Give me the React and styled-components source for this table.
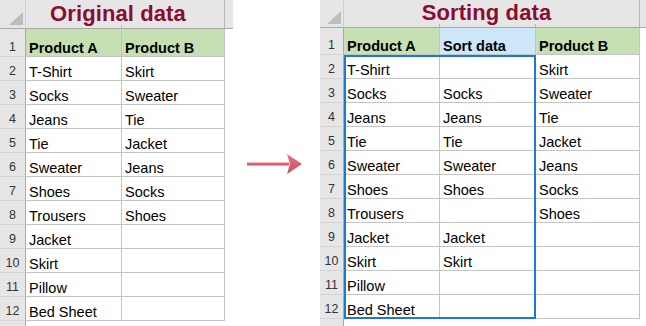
import React from 'react';
import styled, { createGlobalStyle } from 'styled-components';

const GlobalStyle = createGlobalStyle`
  html, body { margin: 0; padding: 0; background: #ffffff; }
  #root { width: 646px; height: 326px; overflow: hidden; }
`;

const GRID = '#c4c4c4';
const HEAD_BG = '#e6e6e6';
const HEAD_EDGE = '#a9a9a9';
const FONT = '"Liberation Sans", Arial, sans-serif';

const Page = styled.div`
  display: flex;
  align-items: flex-start;
  width: 646px;
  height: 326px;
  font-family: ${FONT};
`;

const Sheet = styled.div`
  position: relative;
  display: grid;
  grid-template-columns: ${(p) => p.$cols};
  grid-template-rows: ${(p) => p.$rows};
  flex: none;
`;

const Corner = styled.div`
  position: relative;
  background: ${HEAD_BG};
  border-right: 1px solid #cfcfcf;
  border-bottom: 1px solid ${HEAD_EDGE};
  &::after {
    content: '';
    position: absolute;
    right: 2px;
    bottom: 3px;
    width: 14px;
    height: 13px;
    background: #bdbdbd;
    clip-path: polygon(100% 0, 100% 100%, 0 100%);
  }
`;

const ColHead = styled.div`
  background: ${HEAD_BG};
  border-bottom: 1px solid ${HEAD_EDGE};
  border-right: ${(p) => (p.$sep ? `1px solid ${p.$sep}` : 'none')};
`;

const Title = styled.div`
  position: absolute;
  grid-row: 1;
  grid-column: ${(p) => p.$span};
  top: 0;
  left: 0;
  right: 1px;
  z-index: 1;
  height: ${(p) => p.$h}px;
  padding-top: ${(p) => p.$pt}px;
  padding-right: ${(p) => p.$shift}px;
  box-sizing: border-box;
  background: ${HEAD_BG};
  display: flex;
  justify-content: center;
  font-size: 22px;
  line-height: 24px;
  font-weight: bold;
  letter-spacing: 0.1px;
  color: #8c0c2f;
  white-space: nowrap;
`;

const RowNum = styled.div`
  background: ${HEAD_BG};
  border-right: 1px solid ${HEAD_EDGE};
  border-bottom: ${(p) => (p.$last ? 'none' : '1px solid #d3d3d3')};
  display: flex;
  align-items: flex-end;
  justify-content: center;
  padding-bottom: 2px;
  box-sizing: border-box;
  font-size: 12.5px;
  line-height: 14px;
  color: #333333;
`;

const Cell = styled.div`
  background: ${(p) => p.$bg || '#ffffff'};
  border-right: 1px solid ${GRID};
  border-bottom: 1px solid ${GRID};
  display: flex;
  align-items: flex-end;
  padding-left: 3px;
  box-sizing: border-box;
  overflow: hidden;
  white-space: nowrap;
  font-size: 14.5px;
  line-height: 16px;
  font-weight: ${(p) => (p.$bold ? 'bold' : 'normal')};
  color: #000000;
`;

const Blank = styled.div`
  background: #ffffff;
`;

const Selection = styled.div`
  position: absolute;
  inset: 0;
  grid-column: ${(p) => p.$cols};
  grid-row: ${(p) => p.$rows};
  border: 2px solid #1c7ad0;
  pointer-events: none;
  z-index: 2;
`;

const ArrowArea = styled.div`
  width: 87px;
  height: 326px;
  flex: none;
  display: flex;
  align-items: center;
  padding-left: 14px;
  padding-top: 1px;
  box-sizing: border-box;
`;

const left = {
  header: ['Product A', 'Product B'],
  rows: [
    ['T-Shirt', 'Skirt'],
    ['Socks', 'Sweater'],
    ['Jeans', 'Tie'],
    ['Tie', 'Jacket'],
    ['Sweater', 'Jeans'],
    ['Shoes', 'Socks'],
    ['Trousers', 'Shoes'],
    ['Jacket', ''],
    ['Skirt', ''],
    ['Pillow', ''],
    ['Bed Sheet', ''],
  ],
};

const right = {
  header: ['Product A', 'Sort data', 'Product B'],
  rows: [
    ['T-Shirt', '', 'Skirt'],
    ['Socks', 'Socks', 'Sweater'],
    ['Jeans', 'Jeans', 'Tie'],
    ['Tie', 'Tie', 'Jacket'],
    ['Sweater', 'Sweater', 'Jeans'],
    ['Shoes', 'Shoes', 'Socks'],
    ['Trousers', '', 'Shoes'],
    ['Jacket', 'Jacket', ''],
    ['Skirt', 'Skirt', ''],
    ['Pillow', '', ''],
    ['Bed Sheet', '', ''],
  ],
};

const GREEN = '#c6e0b4';
const BLUE = '#cde7f8';

function Spreadsheet({ cols, rows, data, title, titleH, titlePt, titleShift, headerBgs, selection }) {
  const n = data.header.length;
  return (
    <Sheet $cols={cols} $rows={rows}>
      <Corner />
      {data.header.map((_, i) => (
        <ColHead key={`h${i}`} $sep="#b5b5b5" />
      ))}
      <ColHead />
      <Title $span={`2 / ${n + 2}`} $h={titleH} $pt={titlePt} $shift={titleShift}>
        {title}
      </Title>

      <RowNum>1</RowNum>
      {data.header.map((h, i) => (
        <Cell key={`c1-${i}`} $bold $bg={headerBgs[i]}>
          {h}
        </Cell>
      ))}
      <Blank />

      {data.rows.map((r, ri) => (
        <React.Fragment key={`r${ri}`}>
          <RowNum>{ri + 2}</RowNum>
          {r.map((v, ci) => (
            <Cell key={`c${ri}-${ci}`}>{v}</Cell>
          ))}
          <Blank />
        </React.Fragment>
      ))}

      <RowNum $last />
      {data.header.map((_, i) => (
        <Blank key={`b${i}`} />
      ))}
      <Blank />

      {selection && <Selection $cols={selection.cols} $rows={selection.rows} />}
    </Sheet>
  );
}

function Arrow() {
  return (
    <svg width="56" height="22" viewBox="0 0 56 22">
      <defs>
        <linearGradient id="arrowGrad" x1="0" y1="0" x2="0" y2="1">
          <stop offset="0" stopColor="#e57383" />
          <stop offset="1" stopColor="#cf4a5e" />
        </linearGradient>
      </defs>
      <rect x="0" y="9.5" width="42" height="3" fill="url(#arrowGrad)" />
      <path d="M40 1 L55 11 L40 21 L43 11 Z" fill="url(#arrowGrad)" />
    </svg>
  );
}

export default function App() {
  return (
    <>
      <GlobalStyle />
      <Page>
        <Spreadsheet
          cols="26px 96px 103px 8px"
          rows="29px 28px repeat(11, 24px) 5px"
          data={left}
          title="Original data"
          titleH={25}
          titlePt={2}
          titleShift={14}
          headerBgs={[GREEN, GREEN]}
        />
        <ArrowArea>
          <Arrow />
        </ArrowArea>
        <Spreadsheet
          cols="24px 96px 96px 104px 6px"
          rows="28px 27px repeat(11, 24px) 7px"
          data={right}
          title="Sorting data"
          titleH={24}
          titlePt={1}
          titleShift={10}
          headerBgs={[GREEN, BLUE, GREEN]}
          selection={{ cols: '2 / 4', rows: '3 / 14' }}
        />
      </Page>
    </>
  );
}
